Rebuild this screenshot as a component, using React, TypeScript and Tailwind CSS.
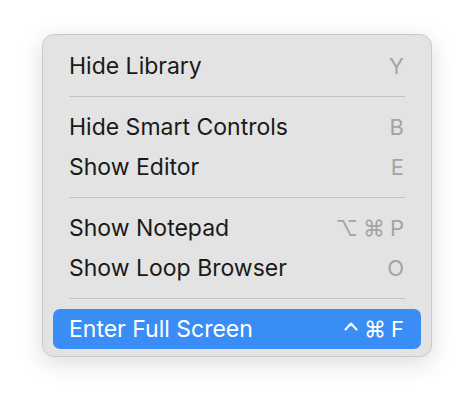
import { Fragment } from 'react';

type Item = { label: string; shortcut: string[]; active?: boolean };

const groups: Item[][] = [
  [{ label: 'Hide Library', shortcut: ['Y'] }],
  [
    { label: 'Hide Smart Controls', shortcut: ['B'] },
    { label: 'Show Editor', shortcut: ['E'] },
  ],
  [
    { label: 'Show Notepad', shortcut: ['⌥', '⌘', 'P'] },
    { label: 'Show Loop Browser', shortcut: ['O'] },
  ],
  [{ label: 'Enter Full Screen', shortcut: ['ctrl', '⌘', 'F'], active: true }],
];

function Shortcut({ keys }: { keys: string[] }) {
  return (
    <span className="flex items-center gap-[5px]">
      {keys.map((k, i) =>
        k === 'ctrl' ? (
          <svg key={i} width="14" height="22" viewBox="0 0 14 22" className="mr-[1px]">
            <path d="M1.5 11.5 L7 5.5 L12.5 11.5" fill="none" stroke="currentColor" strokeWidth="2" strokeLinecap="round" strokeLinejoin="round" />
          </svg>
        ) : (
          <span key={i}>{k}</span>
        )
      )}
    </span>
  );
}

export default function App() {
  return (
    <div
      className="w-[474px] h-[409px] bg-white pl-[42px] pt-[34px]"
      style={{ fontFamily: 'Inter, "Liberation Sans", "DejaVu Sans", sans-serif' }}
    >
      <div className="w-[390px] h-[323px] rounded-[12px] border border-[#c9c9c9] bg-[#e3e3e3] px-[10px] pt-[11px] pb-[8px] shadow-[0_6px_24px_rgba(0,0,0,0.14)]">
        {groups.map((group, gi) => (
          <Fragment key={gi}>
            {gi > 0 && (
              <div className="h-[21px] flex items-center px-[16px]">
                <div className="h-px w-full bg-[#c4c4c4]" />
              </div>
            )}
            {group.map((item) => (
              <div
                key={item.label}
                className={
                  item.active
                    ? 'h-[40px] flex items-center justify-between rounded-[7px] bg-[#3b8df6] pl-[16px] pr-[17px] text-white'
                    : 'h-[40px] flex items-center justify-between pl-[16px] pr-[17px] text-[#1a1a1a]'
                }
              >
                <span className="text-[23px]">{item.label}</span>
                <span
                  className={
                    item.active ? 'text-[22px] text-white' : 'text-[22px] text-[#a3a3a3]'
                  }
                >
                  <Shortcut keys={item.shortcut} />
                </span>
              </div>
            ))}
          </Fragment>
        ))}
      </div>
    </div>
  );
}
